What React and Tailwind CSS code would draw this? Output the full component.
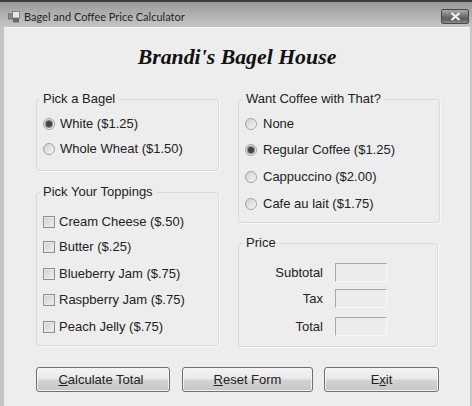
import React from "react";

function Radio({ on }) {
  return (
    <span className="relative flex h-[12px] w-[12px] shrink-0 items-center justify-center rounded-full border border-[#a3a3a3] bg-gradient-to-br from-[#d0d0d0] to-[#f8f8f8]">
      {on && <span className="h-[6px] w-[6px] rounded-full bg-[#444444] ring-1 ring-[#8a8a8a]" />}
    </span>
  );
}

function Check() {
  return <span className="h-[12px] w-[12px] shrink-0 border border-[#8f8f8f] bg-gradient-to-br from-[#cfcfcf] to-[#f0f0f0] ring-1 ring-inset ring-[#e8e8e8]" />;
}

function Group({ title, className, legendClass, children }) {
  return (
    <fieldset className={`rounded-[3px] border border-[#d9d9d9] shadow-[1px_1px_0_#f8f8f8] ${className}`}>
      <legend className={`h-[16px] px-[3px] text-[13px] leading-[16px] text-[#222222] ${legendClass}`}>{title}</legend>
      <div className="pl-[6px]">{children}</div>
    </fieldset>
  );
}

function Option({ className, label, children }) {
  return (
    <div className={`flex h-[16px] items-center text-[13px] leading-[16px] text-[#222222] ${className}`}>
      {children}
      <span>{label}</span>
    </div>
  );
}

function Btn({ className, children }) {
  return (
    <button className={`h-[25px] rounded-[3px] border border-[#6f6f6f] bg-[linear-gradient(#f3f3f3_0%,#e9e9e9_45%,#d2d2d2_55%,#c6c6c6_100%)] text-[13px] text-[#222222] shadow-[inset_0_0_0_1px_#f4f4f4] ${className}`}>
      {children}
    </button>
  );
}

function Price({ label, className }) {
  return (
    <div className={`flex h-[19px] items-center gap-[12px] ${className}`}>
      <span className="ml-[-6px] w-[84px] text-right text-[13px] leading-[16px] text-[#222222]">{label}</span>
      <span className="h-[19px] w-[52px] border-t border-l border-t-[#a8a8a8] border-l-[#a8a8a8] border-r border-b border-r-[#f8f8f8] border-b-[#f8f8f8] bg-[#ececec]" />
    </div>
  );
}

export default function App() {
  return (
    <div className="flex h-[406px] w-[472px] flex-col overflow-hidden bg-[#c4c4c4] font-['Liberation_Sans',Arial,sans-serif]">
      <div className="flex h-[27px] shrink-0 items-start border-t-2 border-t-[#3a3a3a] bg-[linear-gradient(#9a9a9a,#c6c6c6)] pl-[8px] pr-[3px]">
        <svg width="12" height="12" viewBox="0 0 12 12" className="mt-[9px] shrink-0">
          <rect x="0" y="3" width="5" height="5" fill="#8a8a8a" stroke="#555555" strokeWidth="0.7" />
          <rect x="4.5" y="0.5" width="7" height="6.5" fill="#e8e8e8" stroke="#777777" strokeWidth="0.8" />
          <rect x="5" y="7" width="6" height="4.5" fill="#6a6a6a" />
        </svg>
        <span className="ml-[4px] mt-[7px] font-['Lato',sans-serif] text-[11px] leading-[16px] text-[#1f1f1f]">Bagel and Coffee Price Calculator</span>
        <span className="ml-auto mt-[7px] flex h-[15px] w-[28px] items-center justify-center rounded-[2px] border border-[#4a4a4a] bg-[linear-gradient(#a8a8a8,#6f6f6f_50%,#5c5c5c_70%,#8a8a8a)]">
          <svg width="11" height="9" viewBox="0 0 11 9">
            <path d="M1.5 1 L9.5 8 M9.5 1 L1.5 8" stroke="#f2f2f2" strokeWidth="2.2" />
          </svg>
        </span>
      </div>
      <div className="ml-[4px] mr-[2px] flex flex-1 flex-col bg-[#ededed] pl-[32px] shadow-[inset_0_1px_0_#f6f6f6]">
        <h1 className="ml-[-33px] mt-[16px] h-[28px] w-[468px] text-center font-['Liberation_Serif',serif] text-[21.8px] font-bold italic leading-[28px] text-[#111111]">Brandi's Bagel House</h1>
        <div className="mt-[20px] flex gap-[19px]">
          <div className="flex w-[183px] flex-col gap-[13px]">
            <Group title="Pick a Bagel" className="h-[80px]" legendClass="ml-[3px]">
              <Option className="mt-[9px] gap-[5px]" label="White ($1.25)"><Radio on /></Option>
              <Option className="mt-[9px] gap-[5px]" label="Whole Wheat ($1.50)"><Radio /></Option>
            </Group>
            <Group title="Pick Your Toppings" className="h-[162px]" legendClass="ml-[3px]">
              <Option className="mt-[14px] gap-[4px]" label="Cream Cheese ($.50)"><Check /></Option>
              <Option className="mt-[9px] gap-[4px]" label="Butter ($.25)"><Check /></Option>
              <Option className="mt-[11px] gap-[4px]" label="Blueberry Jam ($.75)"><Check /></Option>
              <Option className="mt-[10px] gap-[4px]" label="Raspberry Jam ($.75)"><Check /></Option>
              <Option className="mt-[11px] gap-[4px]" label="Peach Jelly ($.75)"><Check /></Option>
            </Group>
          </div>
          <div className="flex w-[202px] flex-col gap-[12px]">
            <Group title="Want Coffee with That?" className="h-[132px]" legendClass="ml-[4px]">
              <Option className="mt-[9px] gap-[6px]" label="None"><Radio /></Option>
              <Option className="mt-[10px] gap-[6px]" label="Regular Coffee ($1.25)"><Radio on /></Option>
              <Option className="mt-[11px] gap-[6px]" label="Cappuccino ($2.00)"><Radio /></Option>
              <Option className="mt-[11px] gap-[6px]" label="Cafe au lait ($1.75)"><Radio /></Option>
            </Group>
            <Group title="Price" className="h-[112px] w-[200px]" legendClass="ml-[4px]">
              <Price label="Subtotal" className="mt-[12px]" />
              <Price label="Tax" className="mt-[7px]" />
              <Price label="Total" className="mt-[9px]" />
            </Group>
          </div>
        </div>
        <div className="mt-[20px] flex">
          <Btn className="w-[134px] pr-[4px]"><u>C</u>alculate Total</Btn>
          <Btn className="ml-[12px] w-[131px]"><u>R</u>eset Form</Btn>
          <Btn className="ml-[11px] w-[115px]">E<u>x</u>it</Btn>
        </div>
      </div>
    </div>
  );
}
